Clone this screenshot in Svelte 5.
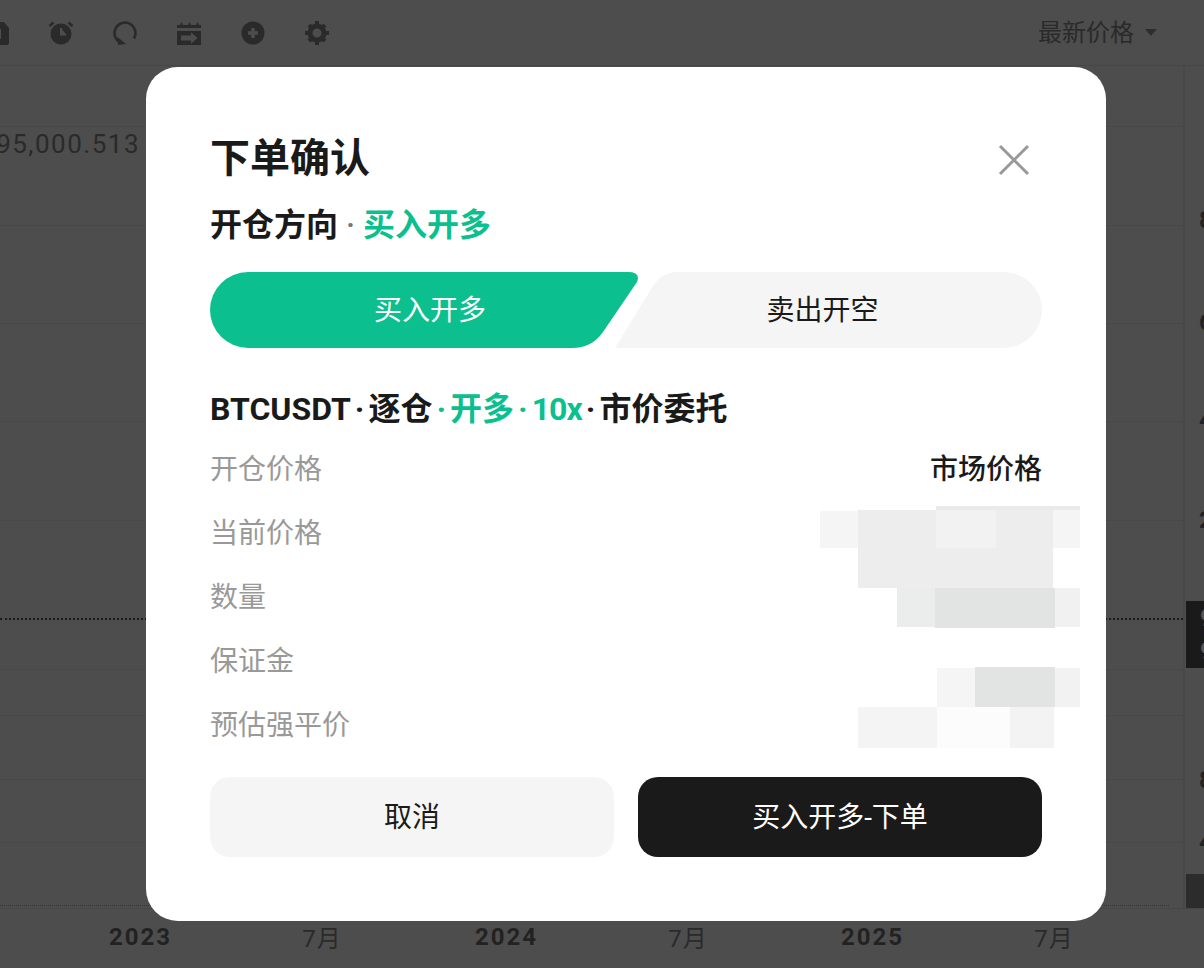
<script>
	const gridLines = [126, 225, 323, 421, 520, 669, 715, 779, 842];
	const axisTicks = [
		{ label: '2023', major: true },
		{ label: '7月', major: false },
		{ label: '2024', major: true },
		{ label: '7月', major: false },
		{ label: '2025', major: true },
		{ label: '7月', major: false }
	];
	const sideLabels = [
		{ text: '8', top: 206 },
		{ text: '6', top: 308 },
		{ text: '4', top: 406 },
		{ text: '2', top: 506 },
		{ text: '8', top: 766 },
		{ text: '4', top: 828 }
	];
	const rows = [
		{ label: '开仓价格', value: '市场价格' },
		{ label: '当前价格', value: '' },
		{ label: '数量', value: '' },
		{ label: '保证金', value: '' },
		{ label: '预估强平价', value: '' }
	];
	// pixelated cover over the values: x, y, w, h, colour (page coordinates)
	const mosaic = [
		[936, 506, 144, 5, '#e9eaea'],
		[820, 511, 38, 37, '#f5f5f5'],
		[858, 510, 195, 78, '#ecedec'],
		[936, 510, 60, 38, '#f2f2f2'],
		[1053, 510, 27, 38, '#f5f5f5'],
		[897, 588, 38, 39, '#ebecec'],
		[935, 588, 120, 40, '#e2e4e3'],
		[1055, 588, 25, 39, '#f1f1f1'],
		[937, 668, 38, 39, '#f5f5f5'],
		[975, 667, 80, 40, '#e2e4e3'],
		[1055, 668, 25, 39, '#f2f2f2'],
		[858, 707, 79, 41, '#f4f4f4'],
		[937, 707, 73, 41, '#fcfcfc'],
		[1010, 707, 44, 41, '#f3f3f3']
	];
</script>

<div class="page">
	<header class="topbar">
		<div class="tools">
			<svg class="tool" viewBox="0 0 24 24">
				<path d="M5 1h14l5 6v15a2 2 0 0 1-2 2H2a2 2 0 0 1-2-2V7z" />
				<path class="cut" d="M9 9h6v8H9z" />
			</svg>
			<svg class="tool" viewBox="0 0 24 24">
				<circle cx="12" cy="13" r="10.500" />
				<path class="cut" d="M12 7v6.500h5" />
				<path class="ear" d="M0.500 5 4.500 1.500M23.500 5 19.500 1.500" />
			</svg>
			<svg class="tool line" viewBox="0 0 24 24">
				<path d="M8.500 22A10.500 10.500 0 1 1 21 17.500" />
				<path class="solid" d="M4.500 16l8.500 7-8 1z" />
			</svg>
			<svg class="tool" viewBox="0 0 24 24">
				<path d="M0 10h24v14H0zM0 4h3l1.500-3L6 4h5l1.500-3L14 4h5l1.500-3L22 4h2v3H0z" />
				<path class="cut" d="M5 15.500h10v-2l4 3.500-4 3.500v-2H5z" />
			</svg>
			<svg class="tool plus" viewBox="0 0 24 24">
				<circle cx="12" cy="12" r="11.500" />
				<path class="cut" d="M12 7v10M7 12h10" />
			</svg>
			<svg class="tool gear" viewBox="0 0 24 24">
				<circle cx="12" cy="12" r="7" />
				<path d="M10 0h4v6h-4zM10 18h4v6h-4zM0 10h6v4H0zM18 10h6v4h-6zM2.500 5.500l3-3L10 7l-3 3zM14 17l3-3 4.500 4.500-3 3zM18.500 2.500l3 3L17 10l-3-3zM7 14l3 3-4.500 4.500-3-3z" />
			</svg>
		</div>
		<div class="price-type">最新价格<span class="caret"></span></div>
	</header>

	<div class="chart">
		<div class="plot">
			{#each gridLines as y}
				<div class="grid-line" style="top: {y - 66}px"></div>
			{/each}
			<div class="last-line"></div>
			<div class="base-line"></div>
			<div class="high">95,000.513</div>
		</div>
		<div class="scale">
			{#each sideLabels as item}
				<span class="scale-label" style="top: {item.top - 66}px">{item.text}</span>
			{/each}
			<div class="tag last"><span>9</span><span>9</span></div>
			<div class="tag low"></div>
		</div>
	</div>

	<footer class="time-axis">
		{#each axisTicks as tick}
			<span class="tick" class:major={tick.major}>{tick.label}</span>
		{/each}
	</footer>
</div>

<div class="overlay">
	<section class="modal">
		<div class="head">
			<h2>下单确认</h2>
			<button class="close" type="button" aria-label="关闭">
				<svg viewBox="0 0 32 32"><path d="M2 2l28 28M30 2L2 30" /></svg>
			</button>
		</div>

		<div class="direction">开仓方向<span class="sep">·</span><span class="green">买入开多</span></div>

		<div class="switch">
			<button class="side buy" type="button">买入开多</button>
			<button class="side sell" type="button">卖出开空</button>
		</div>

		<div class="summary">
			BTCUSDT<span class="dot">·</span>逐仓<span class="green"><span class="dot">·</span>开多<span class="dot">·</span><span class="lev">10x</span></span><span class="dot">·</span>市价委托
		</div>

		<div class="rows">
			{#each rows as row}
				<div class="row">
					<span class="label">{row.label}</span>
					<span class="value">{row.value}</span>
				</div>
			{/each}
		</div>

		<div class="actions">
			<button class="btn cancel" type="button">取消</button>
			<button class="btn confirm" type="button">买入开多-下单</button>
		</div>

		{#each mosaic as [x, y, w, h, color]}
			<div class="cell" style="left: {x - 146}px; top: {y - 67}px; width: {w}px; height: {h}px; background: {color}"></div>
		{/each}
	</section>
</div>

<style>
	:global(body) {
		margin: 0;
		background: #4d4d4d;
		font-family: Roboto, 'Noto Sans CJK SC', sans-serif;
		overflow: hidden;
	}

	.page {
		display: flex;
		flex-direction: column;
		width: 1204px;
		height: 968px;
		background: #4d4d4d;
		overflow: hidden;
		color: #262626;
	}

	.topbar {
		display: flex;
		align-items: center;
		justify-content: space-between;
		flex: 0 0 65px;
		border-bottom: 1px solid #464646;
		padding-right: 47px;
	}

	.tools {
		display: flex;
		align-items: center;
		gap: 40px;
		margin-left: -15px;
	}

	.tool {
		width: 24px;
		height: 24px;
		fill: #2a2a2a;
		overflow: visible;
	}

	.tool .cut {
		fill: #4d4d4d;
		stroke: #4d4d4d;
		stroke-width: 2;
	}

	.tool.plus .cut {
		stroke-width: 3.500;
	}

	.tool .ear {
		fill: none;
		stroke: #2a2a2a;
		stroke-width: 2.500;
	}

	.tool.line path {
		fill: none;
		stroke: #2a2a2a;
		stroke-width: 2.500;
	}

	.tool.line .solid {
		fill: #2a2a2a;
		stroke: none;
	}

	.gear circle {
		fill: none;
		stroke: #2a2a2a;
		stroke-width: 5;
	}

	.price-type {
		display: flex;
		align-items: center;
		margin-bottom: 4px;
		font-size: 24px;
		color: #2a2a2a;
	}

	.caret {
		width: 0;
		height: 0;
		margin: 3px 0 0 11px;
		border-left: 6px solid transparent;
		border-right: 6px solid transparent;
		border-top: 7px solid #2e2e2e;
	}

	.chart {
		display: flex;
		flex: 1;
		min-height: 0;
		border-bottom: 1px solid #464646;
	}

	.plot {
		position: relative;
		flex: 1;
		border-right: 2px solid #484848;
	}

	.grid-line {
		position: absolute;
		left: 0;
		right: 0;
		height: 1px;
		background: #484848;
	}

	.last-line {
		position: absolute;
		left: 0;
		right: 0;
		top: 552px;
		border-top: 2px dotted #1a1a1a;
	}

	.base-line {
		position: absolute;
		left: 0;
		right: 14px;
		top: 839px;
		border-top: 1px dotted #333;
	}

	.high {
		position: absolute;
		top: 62px;
		right: 1043px;
		font-size: 26px;
		line-height: 32px;
		letter-spacing: 1.500px;
		color: #2a2a2a;
		white-space: nowrap;
	}

	.scale {
		position: relative;
		flex: 0 0 19px;
		overflow: hidden;
	}

	.scale-label {
		position: absolute;
		left: 14px;
		font-size: 24px;
		line-height: 28px;
		font-weight: 700;
		color: #222;
	}

	.tag {
		position: absolute;
		left: 1px;
		right: 0;
	}

	.tag.last {
		top: 535px;
		height: 67px;
		display: flex;
		flex-direction: column;
		justify-content: space-around;
		padding-left: 14px;
		background: #1a1a1a;
		color: #555;
		font-size: 24px;
		line-height: 28px;
		font-weight: 700;
	}

	.tag.low {
		top: 808px;
		height: 34px;
		background: #2c2c2c;
	}

	.time-axis {
		display: flex;
		flex: 0 0 59px;
		align-items: center;
		padding: 0 0 4px 49px;
		box-sizing: border-box;
	}

	.tick {
		flex: 0 0 183px;
		box-sizing: border-box;
		padding-right: 3px;
		text-align: center;
		font-size: 24px;
		letter-spacing: 1px;
		color: #2a2a2a;
	}

	.tick.major {
		padding-right: 0;
		font-weight: 700;
		letter-spacing: 2px;
		color: #222;
	}

	.overlay {
		position: absolute;
		top: 0;
		left: 0;
		width: 1204px;
		height: 968px;
		padding-top: 67px;
		box-sizing: border-box;
		display: flex;
		justify-content: flex-start;
		padding-left: 146px;
	}

	.modal {
		position: relative;
		display: flex;
		flex-direction: column;
		box-sizing: border-box;
		width: 960px;
		height: 854px;
		padding: 68px 64px 64px;
		background: #fff;
		border-radius: 32px;
		color: #1a1a1a;
	}

	.head {
		display: flex;
		align-items: center;
		justify-content: space-between;
		height: 48px;
	}

	h2 {
		margin: 0;
		font-size: 40px;
		line-height: 48px;
		font-weight: 700;
	}

	.close {
		display: flex;
		width: 32px;
		height: 32px;
		margin: 2px 12px 0 0;
		padding: 0;
		border: none;
		background: none;
	}

	.close svg {
		width: 32px;
		height: 32px;
		fill: none;
		stroke: #999;
		stroke-width: 3;
	}

	.direction {
		margin-top: 22px;
		font-size: 32px;
		line-height: 40px;
		font-weight: 700;
	}

	.sep {
		padding: 0 8px;
		color: #777;
		font-weight: 500;
	}

	.green {
		color: #0bbf8e;
	}

	.switch {
		display: flex;
		margin-top: 27px;
	}

	.side {
		height: 76px;
		padding: 0 0 4px;
		border: none;
		font: inherit;
		font-size: 28px;
	}

	.buy {
		flex: 0 0 428px;
		padding-left: 12px;
		background: #0bbf8e;
		color: #fff;
		clip-path: path('M38 0H418Q431 0 427 10L393 60Q382 76 362 76H38A38 38 0 0 1 38 0Z');
	}

	.sell {
		flex: 0 0 427px;
		margin-left: -23px;
		padding-right: 12px;
		background: #f5f5f5;
		color: #1a1a1a;
		clip-path: path('M0 76L38 14Q47 0 62 0H389A38 38 0 0 1 389 76Z');
	}

	.summary {
		margin-top: 39px;
		font-size: 32px;
		line-height: 44px;
		font-weight: 700;
		white-space: nowrap;
	}

	.dot {
		padding: 0 4px;
	}

	.lev {
		letter-spacing: -1px;
	}

	.rows {
		margin-top: 4px;
	}

	.row {
		display: flex;
		align-items: center;
		justify-content: space-between;
		height: 64px;
		font-size: 28px;
	}

	.label {
		color: #999;
	}

	.value {
		font-weight: 500;
	}

	.actions {
		display: grid;
		grid-template-columns: 1fr 1fr;
		gap: 24px;
		margin-top: 22px;
	}

	.btn {
		height: 80px;
		padding: 0 0 4px;
		border: none;
		border-radius: 20px;
		font: inherit;
		font-size: 28px;
	}

	.cancel {
		background: #f5f5f5;
		color: #1a1a1a;
	}

	.confirm {
		background: #1a1a1a;
		color: #fff;
	}

	.cell {
		position: absolute;
	}
</style>
